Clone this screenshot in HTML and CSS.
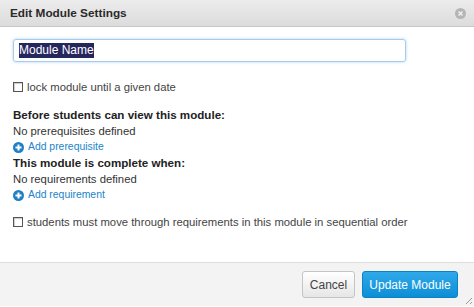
FILE: index.html
```html
<!DOCTYPE html>
<html lang="en">
<head>
    <meta charset="UTF-8">
    <title>Edit Module Settings</title>
    <link rel="stylesheet" href="styles.css">
</head>
<body>

<div class="dialog">
    <div class="dialog-title">
        <span>Edit Module Settings</span>
        <span class="close-btn">
            <svg width="11" height="11" viewBox="0 0 11 11">
                <circle cx="5.5" cy="5.5" r="5.5" fill="#b5b5b5"/>
                <path d="M3.5 3.5 L7.5 7.5 M7.5 3.5 L3.5 7.5" stroke="#eeeeee" stroke-width="1.6"/>
            </svg>
        </span>
    </div>

    <div class="dialog-body">
        <div class="name-field"><span class="selected">Module Name</span></div>

        <label class="check-row lock-row">
            <span class="box"></span> lock module until a given date
        </label>

        <div class="section">
            <div class="section-title">Before students can view this module:</div>
            <div>No prerequisites defined</div>
            <a class="add-link" href="#">
                <svg width="11" height="11" viewBox="0 0 11 11">
                    <circle cx="5.5" cy="5.5" r="5.5" fill="#1f7fc4"/>
                    <path d="M5.5 2.5 V8.5 M2.5 5.5 H8.5" stroke="#fff" stroke-width="2"/>
                </svg>
                Add prerequisite
            </a>
            <div class="section-title">This module is complete when:</div>
            <div>No requirements defined</div>
            <a class="add-link" href="#">
                <svg width="11" height="11" viewBox="0 0 11 11">
                    <circle cx="5.5" cy="5.5" r="5.5" fill="#1f7fc4"/>
                    <path d="M5.5 2.5 V8.5 M2.5 5.5 H8.5" stroke="#fff" stroke-width="2"/>
                </svg>
                Add requirement
            </a>
        </div>

        <label class="check-row seq-row">
            <span class="box"></span> students must move through requirements in this module in sequential order
        </label>
    </div>

    <div class="dialog-footer">
        <button class="btn btn-cancel">Cancel</button>
        <button class="btn btn-primary">Update Module</button>
        <span class="grip"></span>
    </div>
</div>

</body>
</html>
```

FILE: styles.css
```css
body, html {
    margin: 0;
    padding: 0;
    background-color: #fff;
    color: #333;
    font-family: "Liberation Sans", Arial, sans-serif;
    font-size: 11.3px;
}
.dialog {
    width: 474px;
    height: 307px;
    display: flex;
    flex-direction: column;
    overflow: hidden;
}
.dialog-title {
    height: 26px;
    background: linear-gradient(#ececec, #dcdcdc);
    border-bottom: 1px solid #c8c8c8;
    display: flex;
    align-items: center;
    justify-content: space-between;
    padding: 0 8px 0 10px;
    font-weight: bold;
    font-size: 11.8px;
    color: #2a2a2a;
}
.close-btn {
    display: flex;
}
.dialog-body {
    flex: 1;
    padding: 12px 13px 0 13px;
}
.name-field {
    box-sizing: border-box;
    width: 393px;
    height: 23px;
    border: 1px solid #a9cbe9;
    border-radius: 3px;
    box-shadow: 0 0 3px rgba(82, 168, 236, 0.5);
    display: flex;
    align-items: center;
    padding-left: 5px;
    font-size: 12px;
}
.selected {
    background: #26265e;
    color: #fff;
    line-height: 15px;
}
.check-row {
    display: flex;
    align-items: center;
    gap: 4px;
    color: #444;
    line-height: 16px;
}
.lock-row {
    margin-top: 17px;
}
.seq-row {
    margin-top: 11px;
}
.box {
    width: 8px;
    height: 8px;
    border: 1px solid #555;
    background: #fff;
    box-shadow: inset 1px 1px 1px #ccc;
}
.section {
    margin-top: 12px;
    line-height: 16px;
}
.section-title {
    font-weight: bold;
    font-size: 11.6px;
    color: #222;
}
.add-link {
    display: flex;
    align-items: center;
    gap: 4px;
    color: #1a84c8;
    text-decoration: none;
    font-size: 10.4px;
    line-height: 16px;
}
.dialog-footer {
    height: 43px;
    border-top: 1px solid #dedede;
    background: #f3f3f3;
    display: flex;
    align-items: center;
    justify-content: flex-end;
    gap: 7px;
    padding-right: 16px;
    position: relative;
    margin-bottom: 1px;
}
.btn {
    box-sizing: border-box;
    height: 27px;
    font-family: "Liberation Sans", Arial, sans-serif;
    font-size: 12px;
    border-radius: 3px;
    padding: 0;
    white-space: nowrap;
    cursor: pointer;
}
.btn-cancel {
    background: linear-gradient(#ffffff, #e6e6e6);
    border: 1px solid #c4c4c4;
    color: #444;
    width: 53px;
}
.btn-primary {
    background: linear-gradient(#2fa9ea, #0c8ed6);
    border: 1px solid #0b82c4;
    color: #fff;
    width: 96px;
}
.grip {
    position: absolute;
    right: 2px;
    bottom: 2px;
    width: 9px;
    height: 9px;
    background: repeating-linear-gradient(135deg, transparent 0 2px, #999 2px 3px);
    clip-path: polygon(100% 0, 100% 100%, 0 100%);
}
```
